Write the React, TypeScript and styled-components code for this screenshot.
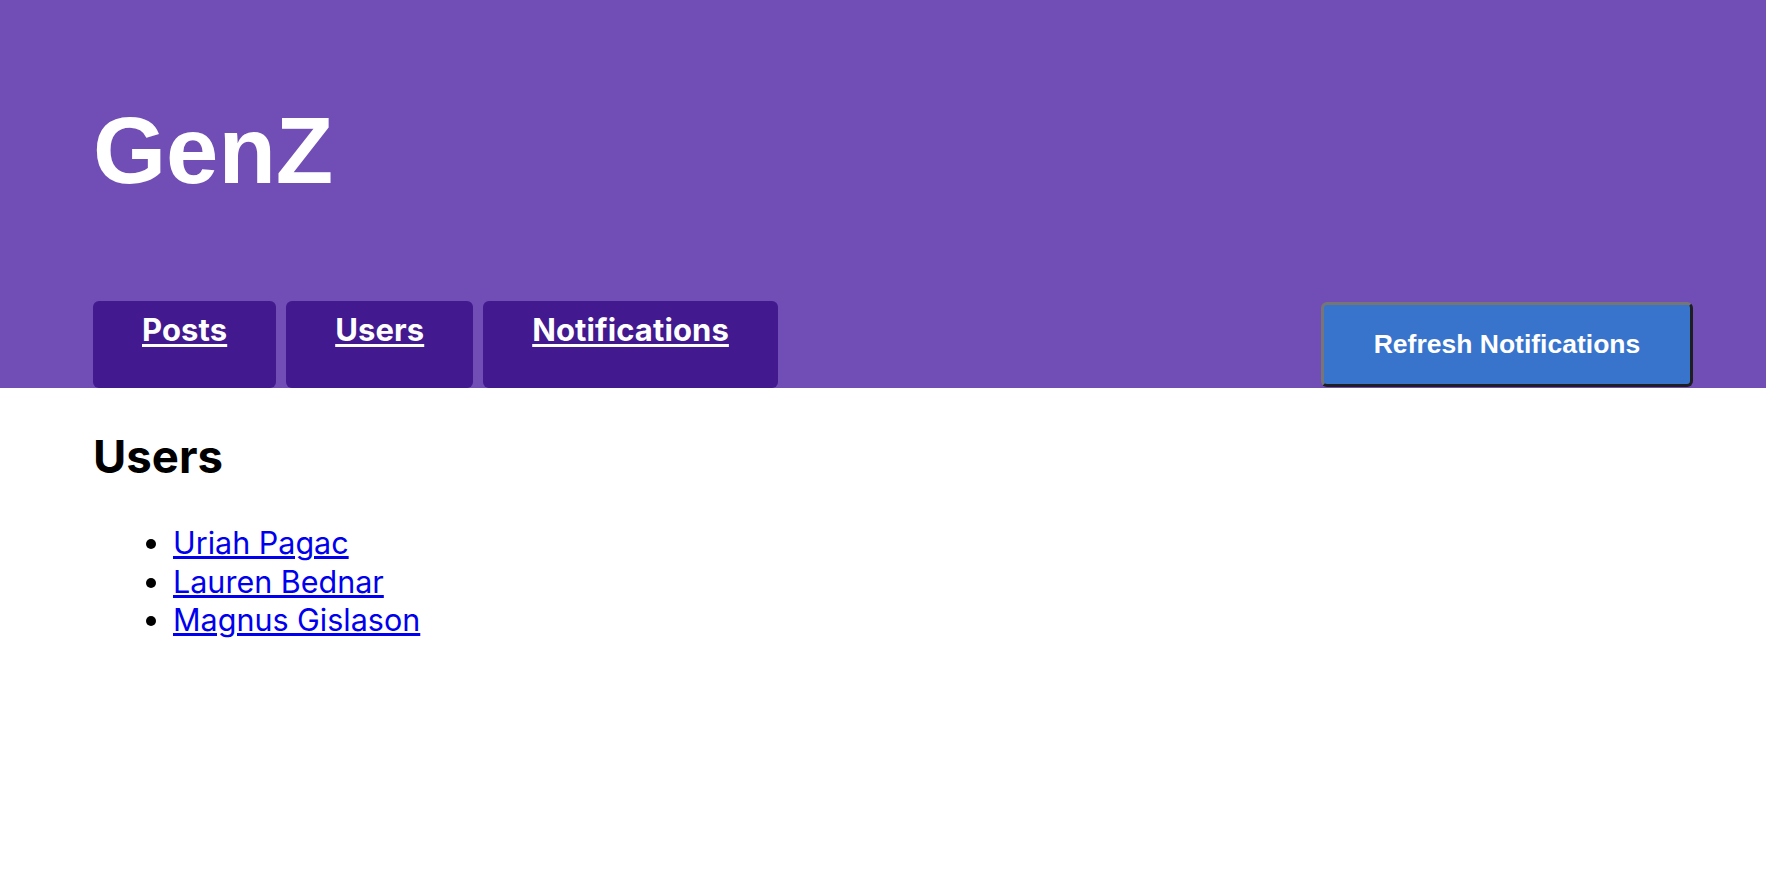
import styled, { createGlobalStyle } from 'styled-components'

const GlobalStyle = createGlobalStyle`
	html, body {
		margin: 0;
		padding: 0;
		background: #fff;
	}
	body {
		font-family: Inter, 'Noto Sans', sans-serif;
		color: #000;
	}
`

const Header = styled.nav`
	background: #714eb5;
	padding: 0 73px 0 93px;
	section {
		display: flex;
		flex-direction: column;
	}
`

const Title = styled.h1`
	margin: 97px 0 96px;
	font-family: 'Liberation Sans', Arial, sans-serif;
	font-weight: 700;
	font-size: 94px;
	line-height: 108px;
	color: #fff;
`

const NavRow = styled.div`
	display: flex;
	justify-content: space-between;
	align-items: flex-start;
`

const NavLinks = styled.div`
	display: flex;
	gap: 10px;
`

const Tab = styled.a`
	display: block;
	height: 87px;
	box-sizing: border-box;
	padding: 10px 49px 0;
	background: #42198f;
	border-radius: 6px;
	color: #fff;
	font-weight: 700;
	font-size: 31px;
	letter-spacing: 0.1px;
	text-decoration: underline;
	text-underline-offset: 3px;
	cursor: pointer;
`

const RefreshButton = styled.button`
	width: 372px;
	height: 85px;
	margin-top: 1px;
	box-sizing: border-box;
	background: #3874cc;
	color: #fff;
	font-family: 'Liberation Sans', Arial, sans-serif;
	font-weight: 700;
	font-size: 26.5px;
	border-width: 3px;
	border-style: solid;
	border-color: #767676 #1f1f1f #1f1f1f #767676;
	border-radius: 6px;
	cursor: pointer;
`

const Main = styled.main`
	padding: 0 73px 0 93px;
`

const Heading = styled.h2`
	margin: 40px 0 39px;
	font-weight: 700;
	font-size: 45.5px;
	line-height: 57px;
`

const UserList = styled.ul`
	margin: 0;
	padding-left: 80px;
	li {
		font-size: 30.5px;
		line-height: 38.5px;
	}
	a {
		color: #0000ee;
		text-decoration: underline;
	}
`

const users = ['Uriah Pagac', 'Lauren Bednar', 'Magnus Gislason']

const App = () => {
	return (
		<>
			<GlobalStyle />
			<Header>
				<section>
					<Title>GenZ</Title>
					<NavRow>
						<NavLinks>
							<Tab>Posts</Tab>
							<Tab>Users</Tab>
							<Tab>Notifications</Tab>
						</NavLinks>
						<RefreshButton>Refresh Notifications</RefreshButton>
					</NavRow>
				</section>
			</Header>
			<Main>
				<Heading>Users</Heading>
				<UserList>
					{users.map((name) => (
						<li key={name}>
							<a href={'#'}>{name}</a>
						</li>
					))}
				</UserList>
			</Main>
		</>
	)
}

export default App
